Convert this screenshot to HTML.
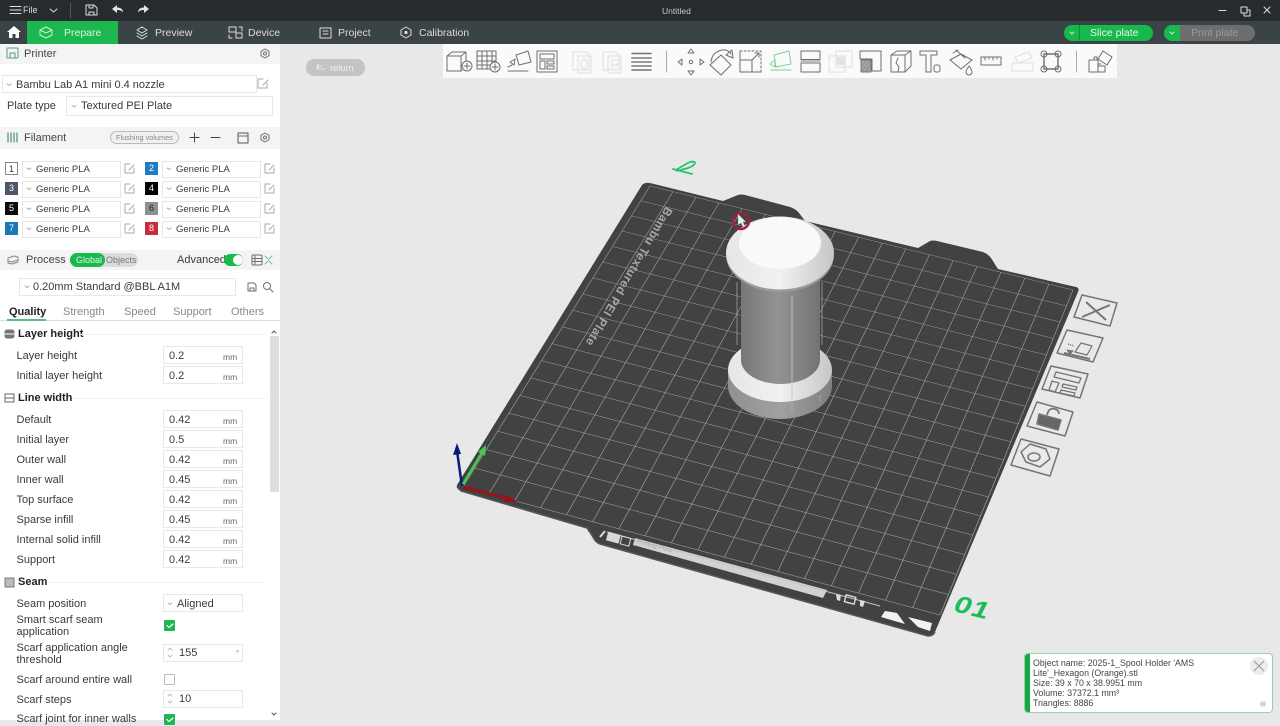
<!DOCTYPE html>
<html><head><meta charset="utf-8"><title>Untitled</title>
<style>
html,body{margin:0;padding:0;width:1280px;height:720px;overflow:hidden;background:#e8e8e8;font-family:"Liberation Sans","Noto Sans CJK SC",sans-serif;color:#3a3a3a}
.a{position:absolute}
.t{position:absolute;white-space:nowrap;font-size:11px;line-height:14px;margin-top:1px}
.b{font-weight:bold;color:#222}
.box{position:absolute;background:#fff;border:1px solid #e8e8e8;box-sizing:border-box}
.v{left:169px}
.mm{position:absolute;left:223px;font-size:8.5px;line-height:12px;color:#666;margin-top:1px}
svg{position:absolute;left:0;top:0;overflow:visible}
.ic{fill:none;stroke:#6e6e6e;stroke-width:1;stroke-linejoin:round;stroke-linecap:round}
.fd{fill:none;stroke:#dedede;stroke-width:1}
.sw{position:absolute;width:13px;height:13px;font-size:9px;line-height:13px;text-align:center;color:#fff;box-sizing:border-box}
.tab{font-size:10.5px}
</style></head><body>

<!-- viewport: plate -->
<svg width="1280" height="720" viewBox="0 0 1280 720">
<path d="M457 485L642 185Q645 182 650 183L723 201L738 195Q741 194 745 195L790 207Q796 209 799 213L805 221L918 248L930 241Q933 240 937 241L983 252Q988 254 991 258L998 269L1076 287Q1080 288 1078 292L935 632Q933 636 928 636L600 544Q595 542 593 537L587 528L461 491Q456 489 457 485Z" fill="#414342"/>
<path d="M457 487L461 491L587 528L593 537Q595 542 600 544L928 636Q933 636 935 632" fill="none" stroke="#565756" stroke-width="1.5"/>
</svg>
<div class="a" style="left:0;top:0;width:180px;height:180px;transform-origin:0 0;transform:matrix3d(2.4934,0.60867,0,-0.00016656,1.5339,-1.5306,0,0.00076156,0,0,1,0,463,487,0,1)">
<svg width="180" height="180" viewBox="0 0 180 180"><path fill="none" stroke="#a0a0a0" stroke-width="0.25" d="M0 0V180M10 0V180M20 0V180M30 0V180M40 0V180M50 0V180M60 0V180M70 0V180M80 0V180M90 0V180M100 0V180M110 0V180M120 0V180M130 0V180M140 0V180M150 0V180M160 0V180M170 0V180M180 0V180M0 0H180M0 10H180M0 20H180M0 30H180M0 40H180M0 50H180M0 60H180M0 70H180M0 80H180M0 90H180M0 100H180M0 110H180M0 120H180M0 130H180M0 140H180M0 150H180M0 160H180M0 170H180M0 180H180"/></svg>
</div>

<svg width="1280" height="720" viewBox="0 0 1280 720">
<defs>
<linearGradient id="cyl" x1="0" x2="1" y1="0" y2="0"><stop offset="0" stop-color="#777"/><stop offset=".45" stop-color="#939393"/><stop offset=".7" stop-color="#868686"/><stop offset="1" stop-color="#727272"/></linearGradient>
<linearGradient id="fl" x1="0" x2="1" y1="0" y2="0"><stop offset="0" stop-color="#e6e6e6"/><stop offset=".5" stop-color="#f2f1f1"/><stop offset="1" stop-color="#c6c6c6"/></linearGradient>
<linearGradient id="fs" x1="0" x2="1" y1="0" y2="0"><stop offset="0" stop-color="#909090"/><stop offset=".5" stop-color="#a0a0a0"/><stop offset="1" stop-color="#808080"/></linearGradient>
</defs>
<!-- plate labels -->
<text transform="translate(666,206) rotate(120.5)" font-family="Liberation Sans" font-weight="bold" font-size="12" letter-spacing="0.45" fill="#a8a8a8">Bambu Textured PEI Plate</text>
<polygon points="635,538 827,590 823,598 633,545" fill="#d2d2d2"/>
<path d="M607 532L880 606" stroke="#c4c4c4" stroke-width="1" fill="none"/>
<path d="M600 537L605 531" stroke="#ddd" stroke-width="2"/>
<rect x="607" y="533" width="13" height="9" fill="#d8d8d8" transform="rotate(15 613 537)"/>
<rect x="621" y="537" width="9" height="8" fill="none" stroke="#d8d8d8" transform="rotate(15 625 541)"/>
<text transform="translate(637,543) rotate(15)" font-size="6" fill="#aaa" font-family="Liberation Sans">Printing Plate</text>
<rect x="845" y="596" width="10" height="7" fill="none" stroke="#e4e4e4" stroke-width="1.3" transform="rotate(15 850 600)"/>
<path d="M836 594l5 1-1 6-3-1zM860 600l5 1-2 6-3-1z" fill="#ddd"/>
<polygon points="881,617 885,611 897,613 905,624" fill="#f2f2f2"/>
<polygon points="908,617 932,623 930,631 918,627" fill="#f2f2f2"/>
<text transform="translate(953,611) rotate(14) scale(1.25,1)" font-family="Liberation Sans" font-style="italic" font-weight="bold" font-size="24" letter-spacing="1" fill="#16bf5b">01</text>
<path d="M673 169L692 174M676 170Q684 165 690 162Q695 161 695 163Q694 166 688 168L677 171" fill="none" stroke="#26c56c" stroke-width="1.8" stroke-linecap="round"/>
<!-- axes -->
<path d="M462 486L457 451" stroke="#0a1a7a" stroke-width="2.5"/><polygon points="457,443 453,455 461,454" fill="#0a1a7a"/>
<path d="M463 484L483 451" stroke="#46cc46" stroke-width="2.5"/><polygon points="486,445 478,452 485,456" fill="#46cc46"/>
<path d="M463 487L510 499" stroke="#9a1218" stroke-width="3"/><polygon points="518,502 506,495 504,502" fill="#9a1218"/>
<!-- model -->
<path d="M728 370V386A52 33 0 0 0 832 386V370Z" fill="url(#fs)"/>
<ellipse cx="780" cy="370" rx="52" ry="32" fill="url(#fl)"/>
<path d="M741 280V360A39.500 24 0 0 0 820 360V280Z" fill="url(#cyl)"/>
<path d="M792 296V384" stroke="#cfcfcf" stroke-width=".8"/>
<path d="M737 282V345M822 282V345M792 384V412M820 395V402" stroke="#bdbdbd" stroke-width=".6"/>
<ellipse cx="780" cy="255" rx="54" ry="37" fill="#9a9a9a"/>
<ellipse cx="780" cy="253" rx="54" ry="36.500" fill="url(#fl)"/>
<ellipse cx="780" cy="243" rx="41" ry="26" fill="#faf8f8"/>
<!-- cursor -->
<circle cx="741" cy="221" r="8" fill="none" stroke="#a41e3f" stroke-width="2.4"/>
<path d="M738 214L738 225L741 223L743 227L745 226L743 222L746 222Z" fill="#eee" stroke="#888" stroke-width=".4"/>
<!-- side buttons -->
<g fill="none" stroke="#757575" stroke-width="1.5" stroke-linejoin="round">
<polygon points="1082,295 1117,303 1110,326 1074,317" fill="#e9e9e9"/>
<polygon points="1067,330 1103,338 1093,362 1057,353" fill="#e9e9e9"/>
<polygon points="1051,366 1088,374 1080,398 1042,389" fill="#e9e9e9"/>
<polygon points="1037,402 1073,412 1065,436 1027,426" fill="#e9e9e9"/>
<polygon points="1021,439 1059,449 1050,476 1011,465" fill="#e9e9e9"/>
<path d="M1086 302L1106 320M1110 305L1082 317" stroke-width="2"/>
<path d="M1081 343L1092 346L1087 355L1075 352Z" stroke-width="1.200"/>
<path d="M1067 350l6 1-3 3z" fill="#777" stroke-width="1"/>
<path d="M1064 353L1090 359" stroke-width="2"/>
<path d="M1068 344l6 2" stroke-width="1.500" stroke-dasharray="1 1"/>
<path d="M1056 372L1081 378L1079 383L1054 377ZM1052 381L1059 383L1055 392L1049 390ZM1063 384L1077 387L1076 390L1062 387ZM1061 390L1075 393L1074 396L1060 393Z" stroke-width="1.300"/>
<path d="M1047 415Q1049 407 1055 409Q1059 410 1059 414" stroke-width="1.800"/>
<polygon points="1039,414 1061,420 1058,430 1037,424" fill="#666"/>
<polygon points="1021,452 1030,444 1046,449 1050,459 1040,467 1026,462" stroke-width="1.500"/>
<ellipse cx="1034" cy="457" rx="6" ry="4" stroke-width="1.500"/>
</g>
</svg>

<!-- return button -->
<div class="a" style="left:306px;top:59px;width:59px;height:17px;background:#c4c4c4;border-radius:8px"></div>
<div class="t" style="left:330px;top:60px;font-size:9px;color:#eee">return</div>
<svg width="1280" height="720"><path d="M322 66h-5m0 0l2-2m-2 2l2 2M317 66v3h8" fill="none" stroke="#e8e8e8" stroke-width="1"/></svg>

<!-- top bars -->
<div class="a" style="left:0;top:0;width:1280px;height:21px;background:#272b2d"></div>
<div class="a" style="left:0;top:21px;width:1280px;height:23px;background:#3a4345"></div>
<div class="a" style="left:27px;top:21px;width:91px;height:23px;background:#1cb84f"></div>
<div class="t" style="left:23px;top:2px;color:#ddd;font-size:9px">File</div>
<div class="t" style="left:662px;top:3px;color:#c8c8c8;font-size:8.5px">Untitled</div>
<div class="t tab" style="left:64px;top:25px;color:#d8f5e2">Prepare</div>
<div class="t tab" style="left:155px;top:25px;color:#ddd">Preview</div>
<div class="t tab" style="left:248px;top:25px;color:#ddd">Device</div>
<div class="t tab" style="left:338px;top:25px;color:#ddd">Project</div>
<div class="t tab" style="left:419px;top:25px;color:#ddd">Calibration</div>

<!-- slice buttons -->
<div class="a" style="left:1064px;top:25px;width:89px;height:16px;background:#17b94c;border-radius:8px"></div>
<div class="a" style="left:1079px;top:25px;width:1px;height:16px;background:#0f8f3a"></div>
<div class="t tab" style="left:1090px;top:25px;color:#e6f8ec">Slice plate</div>
<div class="a" style="left:1164px;top:25px;width:91px;height:16px;background:#6d6d6d;border-radius:8px;overflow:hidden"><div style="width:16px;height:16px;background:#17b94c"></div></div>
<div class="t tab" style="left:1191px;top:25px;color:#9a9a9a">Print plate</div>

<svg width="1280" height="720">
<g fill="none" stroke="#ddd" stroke-width="1" stroke-linecap="round" stroke-linejoin="round">
<path d="M10 6.500h11M10 10h11M10 13.500h11"/>
<path d="M50 9l3.500 3 3.500-3"/>
<path d="M70.500 3v15" stroke="#555"/>
<path d="M86 5h8l3 3v7H86ZM89 5v3h4V5M89 15v-3h5v3"/>
<path d="M1219 10.500h7M1241 7h6v6h-6ZM1244 13v3h6v-6h-3M1264 7l6 6M1270 7l-6 6" stroke-width="1"/>
<path d="M1070 32l2 2 2-2M1170 32l2 2 2-2" stroke-width="1"/>
<path d="M46 27l6 3v5l-6 3-6-3v-5zM40 30l6 3 6-3" stroke="#c9f0d6"/>
<path d="M142 27l5 3-5 3-5-3zM137 33l5 3 5-3M137 36l5 3 5-3"/>
<path d="M229 27h7v5h-7zM236 33h6v5h-6zM229 35v3h3M242 31v-4h-3"/>
<path d="M320 28h11v10h-11zM323 31h5M323 34h5"/>
<path d="M406 27l5 3v5l-5 3-5-3v-5z"/>
</g>
<circle cx="406" cy="32.500" r="1.600" fill="#ddd"/>
<path d="M112 9l5-4v2.500c4 0 6 2 6 5-1.500-2-3-2.500-6-2.500v3zM149 9l-5-4v2.500c-4 0-6 2-6 5 1.500-2 3-2.500 6-2.500v3z" fill="#e4e4e4"/>
<path d="M14 26l7 6h-2v6h-3.500v-4h-3v4H9v-6H7z" fill="#fff"/>
</svg>

<!-- sidebar -->
<div class="a" style="left:0;top:44px;width:280px;height:676px;background:#fff"></div>
<div class="a" style="left:0;top:44px;width:280px;height:20px;background:#f4f4f4"></div>
<div class="a" style="left:0;top:127px;width:280px;height:22px;background:#f4f4f4"></div>
<div class="a" style="left:0;top:250px;width:280px;height:20px;background:#f4f4f4"></div>

<div class="t" style="left:24px;top:46px;color:#444">Printer</div>
<div class="box" style="left:2px;top:75px;width:255px;height:18px"></div>
<div class="t" style="left:16px;top:77px;">Bambu Lab A1 mini 0.4 nozzle</div>
<div class="t" style="left:7px;top:98px">Plate type</div>
<div class="box" style="left:66px;top:96px;width:207px;height:20px"></div>
<div class="t" style="left:81px;top:98px">Textured PEI Plate</div>
<div class="t" style="left:24px;top:130px;color:#444">Filament</div>
<div class="a" style="left:110px;top:131px;width:69px;height:13px;border:1px solid #bbb;border-radius:7px;box-sizing:border-box;background:#f0f0f0"></div>
<div class="t" style="left:116px;top:130px;font-size:7.300px;color:#888;line-height:13px">Flushing volumes</div>

<!-- filaments -->
<div class="sw" style="left:5px;top:162px;background:#fff;border:1px solid #888;color:#333">1</div>
<div class="sw" style="left:145px;top:162px;background:#1f7bc4">2</div>
<div class="sw" style="left:5px;top:182px;background:#50566a">3</div>
<div class="sw" style="left:145px;top:182px;background:#000">4</div>
<div class="sw" style="left:5px;top:202px;background:#0a0a0a">5</div>
<div class="sw" style="left:145px;top:202px;background:#909090;color:#222">6</div>
<div class="sw" style="left:5px;top:222px;background:#1878b8">7</div>
<div class="sw" style="left:145px;top:222px;background:#c72c41">8</div>
<div class="box" style="left:22px;top:161px;width:99px;height:17px"></div><div class="box" style="left:162px;top:161px;width:99px;height:17px"></div>
<div class="box" style="left:22px;top:181px;width:99px;height:17px"></div><div class="box" style="left:162px;top:181px;width:99px;height:17px"></div>
<div class="box" style="left:22px;top:201px;width:99px;height:17px"></div><div class="box" style="left:162px;top:201px;width:99px;height:17px"></div>
<div class="box" style="left:22px;top:221px;width:99px;height:17px"></div><div class="box" style="left:162px;top:221px;width:99px;height:17px"></div>
<div class="t" style="left:36px;top:162px;font-size:9.500px">Generic PLA</div><div class="t" style="left:176px;top:162px;font-size:9.500px">Generic PLA</div>
<div class="t" style="left:36px;top:182px;font-size:9.500px">Generic PLA</div><div class="t" style="left:176px;top:182px;font-size:9.500px">Generic PLA</div>
<div class="t" style="left:36px;top:202px;font-size:9.500px">Generic PLA</div><div class="t" style="left:176px;top:202px;font-size:9.500px">Generic PLA</div>
<div class="t" style="left:36px;top:222px;font-size:9.500px">Generic PLA</div><div class="t" style="left:176px;top:222px;font-size:9.500px">Generic PLA</div>

<!-- process -->
<div class="t" style="left:26px;top:252px;color:#444">Process</div>
<div class="a" style="left:70px;top:253px;width:68px;height:14px;background:#dcdcdc;border-radius:7px"></div>
<div class="a" style="left:70px;top:253px;width:35px;height:14px;background:#17b94c;border-radius:7px"></div>
<div class="t" style="left:76px;top:252px;font-size:9px;color:#dff5e6">Global</div>
<div class="t" style="left:106px;top:252px;font-size:9px;color:#777">Objects</div>
<div class="t" style="left:177px;top:252px">Advanced</div>
<div class="a" style="left:224px;top:254px;width:19px;height:12px;background:#17b94c;border-radius:6px"></div>
<div class="a" style="left:233px;top:255px;width:10px;height:10px;background:#fff;border-radius:5px"></div>
<div class="box" style="left:19px;top:278px;width:217px;height:18px"></div>
<div class="t" style="left:33px;top:279px">0.20mm Standard @BBL A1M</div>
<div class="t" style="left:9px;top:304px" ><b style="color:#222">Quality</b></div>
<div class="t" style="left:63px;top:304px;color:#888">Strength</div>
<div class="t" style="left:124px;top:304px;color:#888">Speed</div>
<div class="t" style="left:173px;top:304px;color:#888">Support</div>
<div class="t" style="left:231px;top:304px;color:#888">Others</div>
<div class="a" style="left:0;top:320px;width:280px;height:1px;background:#dcdcdc"></div>
<div class="a" style="left:7px;top:319px;width:39px;height:1.500px;background:#5dbb7d"></div>

<!-- scrollbar -->
<div class="a" style="left:270px;top:336px;width:9px;height:156px;background:#dedede"></div>

<!-- settings -->
<div class="t b" style="left:18px;top:326px">Layer height</div><div class="a" style="left:80px;top:334px;width:185px;height:1px;background:#f0f0f0"></div>
<div class="t" style="left:16.500px;top:348px">Layer height</div>
<div class="t" style="left:16.500px;top:368px">Initial layer height</div>
<div class="t b" style="left:18px;top:390px">Line width</div><div class="a" style="left:72px;top:398px;width:193px;height:1px;background:#f0f0f0"></div>
<div class="t" style="left:16.500px;top:412px">Default</div>
<div class="t" style="left:16.500px;top:432px">Initial layer</div>
<div class="t" style="left:16.500px;top:452px">Outer wall</div>
<div class="t" style="left:16.500px;top:472px">Inner wall</div>
<div class="t" style="left:16.500px;top:492px">Top surface</div>
<div class="t" style="left:16.500px;top:512px">Sparse infill</div>
<div class="t" style="left:16.500px;top:532px">Internal solid infill</div>
<div class="t" style="left:16.500px;top:552px">Support</div>
<div class="t b" style="left:18px;top:574px">Seam</div><div class="a" style="left:48px;top:582px;width:217px;height:1px;background:#f0f0f0"></div>
<div class="t" style="left:16.500px;top:596px">Seam position</div>
<div class="t" style="left:16.500px;top:612px">Smart scarf seam</div>
<div class="t" style="left:16.500px;top:624px">application</div>
<div class="t" style="left:16.500px;top:640px">Scarf application angle</div>
<div class="t" style="left:16.500px;top:652px">threshold</div>
<div class="t" style="left:16.500px;top:672px">Scarf around entire wall</div>
<div class="t" style="left:16.500px;top:692px">Scarf steps</div>
<div class="t" style="left:16.500px;top:711px">Scarf joint for inner walls</div>

<div class="box" style="left:163px;top:346px;width:80px;height:18px"></div><div class="t v" style="top:348px">0.2</div><div class="mm" style="top:350px">mm</div>
<div class="box" style="left:163px;top:366px;width:80px;height:18px"></div><div class="t v" style="top:368px">0.2</div><div class="mm" style="top:370px">mm</div>
<div class="box" style="left:163px;top:410px;width:80px;height:18px"></div><div class="t v" style="top:412px">0.42</div><div class="mm" style="top:414px">mm</div>
<div class="box" style="left:163px;top:430px;width:80px;height:18px"></div><div class="t v" style="top:432px">0.5</div><div class="mm" style="top:434px">mm</div>
<div class="box" style="left:163px;top:450px;width:80px;height:18px"></div><div class="t v" style="top:452px">0.42</div><div class="mm" style="top:454px">mm</div>
<div class="box" style="left:163px;top:470px;width:80px;height:18px"></div><div class="t v" style="top:472px">0.45</div><div class="mm" style="top:474px">mm</div>
<div class="box" style="left:163px;top:490px;width:80px;height:18px"></div><div class="t v" style="top:492px">0.42</div><div class="mm" style="top:494px">mm</div>
<div class="box" style="left:163px;top:510px;width:80px;height:18px"></div><div class="t v" style="top:512px">0.45</div><div class="mm" style="top:514px">mm</div>
<div class="box" style="left:163px;top:530px;width:80px;height:18px"></div><div class="t v" style="top:532px">0.42</div><div class="mm" style="top:534px">mm</div>
<div class="box" style="left:163px;top:550px;width:80px;height:18px"></div><div class="t v" style="top:552px">0.42</div><div class="mm" style="top:554px">mm</div>
<div class="box" style="left:163px;top:594px;width:80px;height:18px"></div><div class="t" style="left:177px;top:596px">Aligned</div>
<div class="a" style="left:164px;top:620px;width:11px;height:11px;background:#1fb655;border-radius:1px"></div>
<div class="box" style="left:163px;top:644px;width:80px;height:18px"></div><div class="t" style="left:179px;top:645px">155</div><div class="t" style="left:236px;top:646px;font-size:8px;color:#888">°</div>
<div class="a" style="left:164px;top:674px;width:11px;height:11px;background:#fff;border:1px solid #bbb;box-sizing:border-box;border-radius:1px"></div>
<div class="box" style="left:163px;top:690px;width:80px;height:18px"></div><div class="t" style="left:179px;top:691px">10</div>
<div class="a" style="left:164px;top:714px;width:11px;height:11px;background:#1fb655;border-radius:1px"></div>

<!-- sidebar icons -->
<svg width="1280" height="720">
<g class="ic">
<rect x="7" y="48" width="11" height="10" rx="1" stroke="#5c9a78"/><path d="M10 58v-5h5v5" stroke="#5c9a78"/>
<path d="M265 49l4 2.300v4.400l-4 2.300-4-2.300v-4.400z"/><circle cx="265" cy="53.500" r="1.500"/>
<path d="M263 79h-5v9h9v-5M263 85l5-5" stroke="#aaa"/>
<path d="M7 84l2 1.500 2-1.500M72 105.500l2 1.500 2-1.500" stroke="#aaa"/>
<path d="M8 133v9M11 133v9M14 133v9M17 133v9" stroke="#5c9a78" stroke-width="1.300"/>
<path d="M190 137.500h9M194.500 133v9M211 137.500h9" stroke="#444"/>
<rect x="238" y="133" width="10" height="10" stroke="#555"/><path d="M238 136h10"/>
<path d="M265 133l4 2.300v4.400l-4 2.300-4-2.300v-4.400z"/><circle cx="265" cy="137.500" r="1.500"/>
<path d="M130 164h-5v9h9v-5M129 170l5-5M270 164h-5v9h9v-5M269 170l5-5M130 184h-5v9h9v-5M129 190l5-5M270 184h-5v9h9v-5M269 190l5-5M130 204h-5v9h9v-5M129 210l5-5M270 204h-5v9h9v-5M269 210l5-5M130 224h-5v9h9v-5M129 230l5-5M270 224h-5v9h9v-5M269 230l5-5" stroke="#aaa"/>
<path d="M27 168l2 1.500 2-1.500M167 168l2 1.500 2-1.500M27 188l2 1.500 2-1.500M167 188l2 1.500 2-1.500M27 208l2 1.500 2-1.500M167 208l2 1.500 2-1.500M27 228l2 1.500 2-1.500M167 228l2 1.500 2-1.500M25 286l2 1.500 2-1.500M168 603l2 1.500 2-1.500" stroke="#aaa"/>
<path d="M8 258l6-2 4 1v3l-6 2-4-1zM8 261v2l4 1 6-2v-2" stroke="#888"/>
<rect x="252" y="255" width="10" height="10" rx="1"/><path d="M252 258.500h10M252 261.500h10M255 255v10"/>
<path d="M265 256l3 3M272 256l-3 3M265 264l3-3M272 264l-3-3" stroke="#6fc08e"/>
<path d="M248 283h6l2 2v6h-8zM250 291v-3h4v3"/>
<circle cx="267" cy="286" r="3.500"/><path d="M270 289l3 3"/>
<rect x="5" y="330" width="9" height="8" rx="2" fill="#777" stroke="#777"/><path d="M5 334h9" stroke="#fff"/>
<rect x="5" y="394" width="9" height="8" fill="#fff" stroke="#666"/><path d="M5 398h9" stroke="#666"/>
<rect x="5" y="578" width="9" height="9" fill="#bbb" stroke="#777"/>
<path d="M272 333l2-2 2 2M272 713l2 2 2-2" stroke="#555"/>
<path d="M167 625.500l2 2 4-3.500M167 719.500l2 2 4-3.500" stroke="#fff" stroke-width="1.200"/>
<path d="M168 650l2-2 2 2M168 655l2 2 2-2M168 696l2-2 2 2M168 701l2 2 2-2" stroke="#bbb"/>
</g>
</svg>

<!-- toolbar -->
<div class="a" style="left:443px;top:44px;width:674px;height:34px;background:#fafafa"></div>
<svg width="1280" height="720">
<g class="ic">
<path d="M447 56h14v15h-14zM447 56l5-4h14l-5 4M466 52v9M461 71l1-1"/><circle cx="467" cy="66" r="5" fill="#fafafa"/><path d="M464 66h6M467 63v6"/>
<path d="M477 51h19v18h-19zM477 56h19M477 61h19M477 65h19M482 51v18M487 51v18M492 51v18"/><circle cx="495" cy="67" r="5" fill="#fafafa"/><path d="M492 67h6M495 64v6"/>
<path d="M516 55l12-4 3 11-12 3zM508 71h20M510 62l5-3-1 6zM508 67l4-2"/>
<rect x="537" y="51" width="20" height="21"/><path d="M540 54h14v5h-14zM540 61h5v8h-5zM547 61h7v3h-7zM547 66h7v3h-7z"/>
<path d="M632 53.500h19M632 70h19" stroke-width="1.500"/><path d="M632 58h19M632 62h19M632 66h19" stroke="#999" stroke-width="2"/>
<path d="M666.500 51v21" stroke="#aaa"/>
<path d="M691 49l3 4h-6zM691 75l3-4h-6zM678 62l4-3v6zM704 62l-4-3v6z"/><circle cx="691" cy="62" r="1.700"/>
<path d="M721 55l10 10-10 10-11-10z"/><path d="M711 62q1-10 11-12 6-1 9 4"/><path d="M732 50l1 8-7-3z"/>
<rect x="740" y="60" width="12" height="12"/><path d="M740 51h21v21" stroke-dasharray="2 2"/><path d="M740 51v8M752 72h9M752 60l7-7M755 53h4v4"/>
<path d="M774 55l15-4 2 13-15 3zM771 70h20M770 64l5-4v7z" stroke="#7fcf9b"/>
<path d="M801 51h19v8.500h-19zM801 63h19v9h-19z"/><path d="M801 61h19" stroke-dasharray="1 1"/>
<path d="M860 51H881V71H872V59H860Z"/><path d="M861 60h10v12h-10z" fill="#a5a5a5" stroke="#777"/><path d="M862 66l4-5M862 71l8-10M866 71l4-5" stroke="#777" stroke-width=".6"/>
<path d="M891 55h14v17h-14zM891 55l6-4h14l-6 4M911 51v15l-6 6M898 58l-2 5 3 4-1 5"/>
<path d="M920 51h17v4h-6v17h-5V55h-6z"/><rect x="934" y="65" width="6" height="7" rx="2"/>
<path d="M950 60l11-6 11 6-11 9zM956 50l9 8M958 50l-5 3"/><path d="M969 66q-3 4-3 6a3 3 0 0 0 6 0q0-2-3-6z"/>
<rect x="981" y="57" width="20" height="8"/><path d="M985 57v3M989 57v2M993 57v3M997 57v2"/>
<rect x="1044" y="54" width="14" height="15" stroke-width="1.400"/><circle cx="1044" cy="54" r="3"/><circle cx="1058" cy="54" r="3"/><circle cx="1044" cy="69" r="3"/><circle cx="1058" cy="69" r="3"/>
<path d="M1076.500 51v21" stroke="#aaa"/>
<path d="M1089 60h9v12h-9zM1098 66h7v6h-7M1103 51l9 6-5 8-9-6zM1094 60v-3h3v3M1098 64h3"/>
</g>
<g class="fd">
<path d="M573 52h13l3 3v15h-16zM578 56h13v17h-13z"/><ellipse cx="584" cy="64" rx="3" ry="5"/>
<path d="M603 52h13l3 3v15h-16zM608 56h13v17h-13zM612 69v-9h4q3 0 3 2t-3 3h-4"/>
<path d="M829 56h16v16h-16zM836 51h16v16h-16z"/>
<path d="M1012 63h21v8h-21zM1015 57l14-5 3 6-14 5z"/>
</g>
<rect x="837" y="57" width="8" height="8" fill="#e2e2e2"/>
</svg>

<!-- notification -->
<div class="a" style="left:1024px;top:653px;width:249px;height:60px;background:#fff;border:1px solid #9ccfaa;border-radius:4px;box-sizing:border-box;overflow:hidden"><div style="width:5px;height:60px;background:#14a844"></div></div>
<div class="t" style="left:1033px;top:657px;font-size:8.800px;line-height:10px;color:#444">Object name: 2025-1_Spool Holder 'AMS<br>Lite'_Hexagon (Orange).stl<br>Size: 39 x 70 x 38.9951 mm<br>Volume: 37372.1 mm³<br>Triangles: 8886</div>
<svg width="1280" height="720">
<circle cx="1259" cy="666" r="9" fill="#ececec"/><path d="M1254 661l10 10M1264 661l-10 10" stroke="#999" stroke-width="1"/>
<circle cx="1263" cy="704" r="3.500" fill="#e6e6e6"/><path d="M1261 704h4" stroke="#aaa"/>
</svg>
</body></html>
